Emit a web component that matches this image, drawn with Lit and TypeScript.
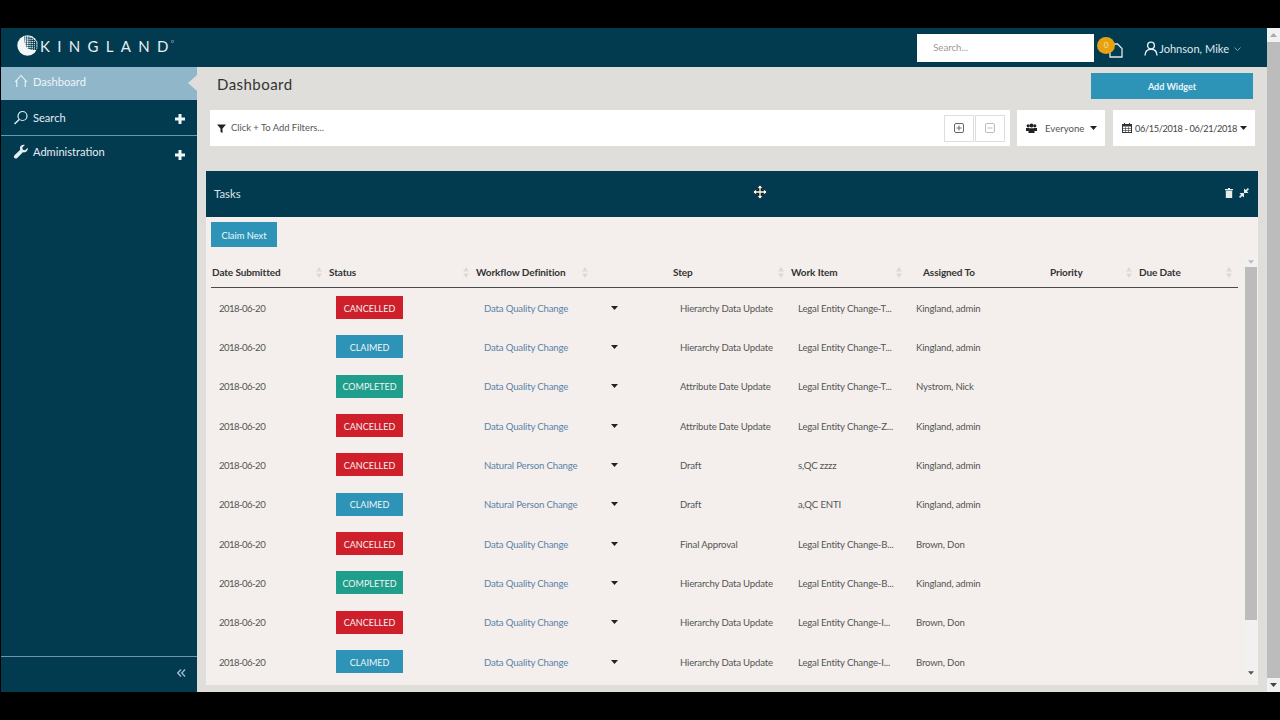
import { LitElement, html, css, svg } from "lit";
import { customElement } from "lit/decorators.js";

const rows = [
  ["CANCELLED", "Data Quality Change", "Hierarchy Data Update", "Legal Entity Change-T...", "Kingland, admin"],
  ["CLAIMED", "Data Quality Change", "Hierarchy Data Update", "Legal Entity Change-T...", "Kingland, admin"],
  ["COMPLETED", "Data Quality Change", "Attribute Date Update", "Legal Entity Change-T...", "Nystrom, Nick"],
  ["CANCELLED", "Data Quality Change", "Attribute Date Update", "Legal Entity Change-Z...", "Kingland, admin"],
  ["CANCELLED", "Natural Person Change", "Draft", "s,QC zzzz", "Kingland, admin"],
  ["CLAIMED", "Natural Person Change", "Draft", "a,QC ENTI", "Kingland, admin"],
  ["CANCELLED", "Data Quality Change", "Final Approval", "Legal Entity Change-B...", "Brown, Don"],
  ["COMPLETED", "Data Quality Change", "Hierarchy Data Update", "Legal Entity Change-B...", "Kingland, admin"],
  ["CANCELLED", "Data Quality Change", "Hierarchy Data Update", "Legal Entity Change-I...", "Brown, Don"],
  ["CLAIMED", "Data Quality Change", "Hierarchy Data Update", "Legal Entity Change-I...", "Brown, Don"],
];

const heads: [string, boolean, string][] = [
  ["Date Submitted", true, ""], ["Status", true, ""], ["Workflow Definition", true, ""], ["", false, ""],
  ["Step", true, ""], ["Work Item", true, ""], ["Assigned To", false, "ind"], ["Priority", true, "pri"], ["Due Date", true, ""],
];

const globeDots = () => {
  const out = [];
  for (let x = 0; x < 6; x++) for (let y = 0; y < 8; y++) {
    const cx = 8.6 + x * 2.2;
    const cy = 1.8 + y * 2.1 + x * 0.15;
    const d = Math.hypot(cx - 10.5, cy - 10.5);
    if (d < 9.9) {
      out.push(svg`<circle cx=${cx} cy=${cy} r=${0.95 - x * 0.07} fill="#f3f5f6"/>`);
    }
  }
  return out;
};

@customElement("app-root")
export class AppRoot extends LitElement {
  static styles = css`
    :host { display: block; width: 1280px; height: 720px; background: #000; overflow: hidden;
      font-family: "Lato", "Noto Sans", sans-serif; color: #333; }
    * { box-sizing: border-box; }
    svg { display: block; flex: none; }
    .frame { display: flex; height: 664px; margin-top: 28px; padding-left: 1px; }
    .app { flex: 1; display: flex; flex-direction: column; min-width: 0; }
    .pagebar { width: 13px; background: #bcbcbc; display: flex; flex-direction: column; justify-content: space-between; }
    .pagebar .end { height: 14px; background: #f1f1f1; display: flex; align-items: center; justify-content: center; }
    .topbar { height: 39px; background: #023a50; display: flex; align-items: center; flex: none; }
    .logo { display: flex; align-items: center; margin: -4px 0 0 16px; gap: 2px; color: #e8eef1; }
    .logo span { font-size: 15px; letter-spacing: 7.3px; font-weight: 400; }
    .logo .r { margin: -9px 0 0 -7px; }
    .search { margin-left: auto; width: 177px; height: 28px; background: #fff; color: #999; font-size: 9.6px;
      display: flex; align-items: center; padding-left: 16px; }
    .bell { position: relative; width: 30px; height: 30px; margin-left: 3px; }
    .badge { position: absolute; left: 0; top: 4px; width: 18px; height: 17px; border-radius: 50%; background: #e6a211;
      color: #f7e3a8; font-size: 8px; display: flex; align-items: center; justify-content: center; }
    .doc { position: absolute; left: 12px; top: 10px; }
    .user { display: flex; align-items: center; color: #dfe8ec; font-size: 11.1px; margin-left: 17px; margin-right: 26px; margin-top: 1px; }
    .user .nm { margin-left: 1px; }
    .user .ch { margin-left: 5px; margin-top: 2px; }
    .content { flex: 1; display: flex; min-height: 0; }
    .side { width: 196px; background: #023a50; color: #e6edf0; display: flex; flex-direction: column; flex: none; }
    .item { display: flex; align-items: flex-start; position: relative; font-size: 11.1px; padding: 8px 0 0 12px; gap: 4px; }
    .item.active { height: 33px; padding-top: 7px; background: #8fb6c9; color: #f0f5f7; }
    .item.active::after { content: ""; position: absolute; right: 0; top: 8px; border: 8px solid transparent;
      border-right: 9px solid #dfdedb; border-left: 0; }
    .item.s { height: 36px; padding-top: 10px; border-bottom: 1px solid #6d97a8; }
    .item.a { height: 34px; padding-top: 8px; }
    .item .ico { width: 16px; height: 16px; }
    .item span { line-height: 15px; }
    .item .plus { position: absolute; left: 173px; top: 13px; }
    .sidefoot { margin-top: auto; height: 36px; border-top: 1px solid #6d97a8; display: flex; justify-content: flex-end;
      align-items: center; padding: 0 11px 4px 0; color: #9dbccb; }
    .main { flex: 1; background: #dfdedb; display: flex; flex-direction: column; min-width: 0; position: relative; padding-left: 8px; }
    .titlerow { display: flex; justify-content: space-between; align-items: flex-start; height: 43px; padding: 6px 14px 0 12px; flex: none; }
    .titlerow h1 { margin: 2px 0 0 0; font-size: 15px; font-weight: 400; letter-spacing: 0.45px; color: #333; }
    .btn { background: #2d94b8; color: #eef7fa; font-size: 9px; font-weight: 700; display: flex; align-items: center; justify-content: center; }
    .add { width: 162px; height: 26px; }
    .filters { display: flex; height: 36px; padding-left: 5px; flex: none; }
    .fbar { width: 800px; background: #fff; display: flex; align-items: center; padding-left: 7px; font-size: 9.4px; color: #555; }
    .fbar .t { margin: -1px 0 0 5px; }
    .sq { width: 30px; height: 27px; border: 1px solid #dedede; display: flex; align-items: center; justify-content: center; background: #fff; }
    .sq.one { margin-left: auto; margin-right: 1px; }
    .sq.two { margin-right: 5px; }
    .drop { background: #fff; display: flex; align-items: center; font-size: 9.6px; color: #555; white-space: nowrap; }
    .drop.ev { width: 88px; margin-left: 7px; padding-left: 9px; gap: 8px; }
    .drop.ev .cr { margin-left: -2px; }
    .drop.dt { width: 142px; margin-left: 8px; padding-left: 9px; gap: 3px; color: #444; font-size: 9.2px; letter-spacing: -0.35px; }
    .card { margin-top: 25px; width: 1052px; flex: 1; margin-bottom: 7px; background: #f4efec; display: flex; flex-direction: column; min-height: 0; margin-left: 1px; }
    .cardhead { height: 46px; background: #023a50; color: #d9e4e9; font-size: 11.3px; display: flex; align-items: center; padding: 0 9px 2px 8px; flex: none; gap: 6px; }
    .cardhead .lbl { margin-right: auto; }
    .move { position: absolute; left: 556px; top: 118px; }
    .cardbody { flex: 1; padding: 5px 0 0 5px; display: flex; flex-direction: column; min-height: 0; }
    .claim { width: 66px; height: 25px; font-weight: 400; font-size: 9.3px; padding-top: 1px; }
    .tablewrap { display: flex; margin-top: 9px; height: 422px; }
    .table { width: 1027px; overflow: hidden; }
    .grid { display: grid; grid-template-columns: 117px 147px 119px 78px 118px 118px 134px 96px 100px; }
    .hdr { height: 32px; border-bottom: 1px solid #4a4a4a; font-size: 10px; letter-spacing: -0.1px; font-weight: 700; color: #333; align-items: center; }
    .hdr > div { position: relative; padding-left: 1px; padding-top: 1px; height: 100%; display: flex; align-items: center; }
    .hdr > div.ind { padding-left: 15px; }
    .hdr > div.pri { padding-left: 8px; }
    .sort { position: absolute; right: 6px; top: 11px; }
    .row { height: 39.33px; align-items: center; font-size: 9.6px; letter-spacing: -0.17px; color: #555; }
    .row > div { padding-left: 8px; padding-top: 1px; white-space: nowrap; overflow: hidden; }
    .row > .stc { padding-top: 0; }
    .row .date { letter-spacing: -0.55px; }
    .row .wf { color: #5a83a8; padding-left: 9px; overflow: visible; }
    .row .car { padding-left: 17px; padding-top: 0; }
    .st { width: 67px; height: 23px; display: flex; align-items: center; justify-content: center; padding-top: 1px; color: #f3f3f3; font-size: 9px; letter-spacing: 0; }
    .CANCELLED { background: #cf1f2b; }
    .CLAIMED { background: #2d94b8; }
    .COMPLETED { background: #1f9e8b; }
    .vs { margin-left: 7px; width: 12px; background: #f1f1f1; display: flex; flex-direction: column; }
    .vs .e { height: 11px; display: flex; align-items: center; justify-content: center; flex: none; }
    .vs .th { height: 353px; background: #bcbcbc; flex: none; }
    .vs .e.b { margin-top: auto; }
  `;

  caret(color = "#222", w = 7) {
    return html`<svg class="cr" width=${w} height="4" viewBox="0 0 7 4"><path d="M0 0h7L3.5 4z" fill=${color}/></svg>`;
  }

  render() {
    return html`
      <div class="frame">
        <div class="app">
          <div class="topbar">
            <div class="logo">
              <svg width="21" height="21" viewBox="0 0 21 21">
                <circle cx="10.500" cy="10.500" r="10.200" fill="#f3f5f6"/>
                <path d="M7.500 .7C13 .4 19 4 20.600 9.500 20.800 11.500 20.400 13.500 19.600 15 15 15.500 11 14.500 9 11.500 7.500 8.500 7 4 7.500 .7z" fill="#023a50"/>
                ${globeDots()}
              </svg>
              <span>KINGLAND</span>
              <svg class="r" width="3" height="3" viewBox="0 0 3 3"><circle cx="1.500" cy="1.500" r="1.200" fill="none" stroke="#c9d6dc" stroke-width=".5"/></svg>
            </div>
            <div class="search">Search...</div>
            <div class="bell">
              <div class="doc">
                <svg width="14" height="15" viewBox="0 0 14 15"><path d="M1 1H8.500L13 5.500V14H1z" fill="none" stroke="#dfe8ec" stroke-width="1.300"/></svg>
              </div>
              <div class="badge">0</div>
            </div>
            <div class="user">
              <svg width="14" height="15" viewBox="0 0 14 15"><circle cx="7" cy="4.500" r="3.400" fill="none" stroke="#e8eef1" stroke-width="1.400"/><path d="M1 14.500c0-4 2.400-6.300 6-6.300s6 2.300 6 6.300" fill="none" stroke="#e8eef1" stroke-width="1.400"/></svg>
              <span class="nm">Johnson, Mike</span>
              <span class="ch"><svg width="7" height="4" viewBox="0 0 7 4"><path d="M.5.5 3.500 3.500 6.500.5" fill="none" stroke="#7fa3b3"/></svg></span>
            </div>
          </div>
          <div class="content">
            <nav class="side">
              <div class="item active">
                <svg class="ico" viewBox="0 0 16 16"><path d="M2 8 8 1.500 14 8M3.800 6.500V13M12.200 6.500V13" fill="none" stroke="#f0f5f7" stroke-width="1.100"/></svg>
                <span>Dashboard</span>
              </div>
              <div class="item s">
                <svg class="ico" viewBox="0 0 16 16"><circle cx="9.500" cy="6" r="4.500" fill="none" stroke="#e6edf0" stroke-width="1.200"/><path d="M6.200 9.500 1.500 14" stroke="#e6edf0" stroke-width="1.500" fill="none"/></svg>
                <span>Search</span>
                <svg class="plus" width="12" height="12" viewBox="0 0 12 12"><path d="M6 1v10M1 6h10" stroke="#f2f5f6" stroke-width="3"/></svg>
              </div>
              <div class="item a">
                <svg class="ico" viewBox="0 0 16 16"><path d="M14.800 3.800 12 6.300 9.800 5.700 9.300 3.600 11.900 1C9.800.3 7.500 1.300 7 3.300 6.800 4.200 7 5 7.200 5.800L1.500 11.200C.6 12 .7 13.300 1.500 14c.8.800 2 .7 2.800-.1L9.900 8.300c2.600.7 5.300-1.400 4.900-4.500z" fill="#e6edf0"/></svg>
                <span>Administration</span>
                <svg class="plus" width="12" height="12" viewBox="0 0 12 12"><path d="M6 1v10M1 6h10" stroke="#f2f5f6" stroke-width="3"/></svg>
              </div>
              <div class="sidefoot">
                <svg width="9" height="8" viewBox="0 0 9 8"><path d="M4 .5.8 4 4 7.500M8 .5 4.800 4 8 7.500" fill="none" stroke="currentColor" stroke-width="1.400"/></svg>
              </div>
            </nav>
            <main class="main">
              <div class="titlerow">
                <h1>Dashboard</h1>
                <div class="btn add">Add Widget</div>
              </div>
              <div class="filters">
                <div class="fbar">
                  <svg width="9" height="9" viewBox="0 0 9 9"><path d="M0 .5h9L5.500 4.500V9L3.500 8V4.500z" fill="#222"/></svg>
                  <span class="t">Click + To Add Filters...</span>
                  <div class="sq one"><svg width="10" height="10" viewBox="0 0 10 10"><rect x=".5" y=".5" width="9" height="9" rx="1.500" fill="none" stroke="#666"/><path d="M5 2.500v5M2.500 5h5" stroke="#666"/></svg></div>
                  <div class="sq two"><svg width="10" height="10" viewBox="0 0 10 10"><rect x=".5" y=".5" width="9" height="9" rx="1.500" fill="none" stroke="#bbb"/><path d="M2.500 5h5" stroke="#bbb"/></svg></div>
                </div>
                <div class="drop ev">
                  <svg width="11" height="10" viewBox="0 0 11 10"><circle cx="2.200" cy="2.800" r="1.600" fill="#222"/><circle cx="8.800" cy="2.800" r="1.600" fill="#222"/><circle cx="5.500" cy="2.500" r="2" fill="#222"/><path d="M0 5h3v3H0zM8 5h3v3H8zM2.500 5.200h6V10h-6z" fill="#222"/></svg>
                  <span>Everyone</span>
                  ${this.caret()}
                </div>
                <div class="drop dt">
                  <svg width="10" height="10" viewBox="0 0 10 10"><rect x=".5" y="1.500" width="9" height="8" fill="none" stroke="#333"/><path d="M0 1.500h10v2H0zM2 0h1v2H2zM7 0h1v2H7z" fill="#333"/><path d="M1 5.500h8M1 7.500h8M3.500 4v5M6.500 4v5" stroke="#333" stroke-width=".6"/></svg>
                  <span>06/15/2018 - 06/21/2018</span>
                  ${this.caret()}
                </div>
              </div>
              <section class="card">
                <div class="cardhead">
                  <span class="lbl">Tasks</span>
                  <svg width="8" height="10" viewBox="0 0 8 10"><path d="M0 1h8v1.200H0zM3 0h2v1H3zM.8 2.800h6.400V10H.8z" fill="#e7edef"/></svg>
                  <svg width="10" height="10" viewBox="0 0 10 10"><path d="M10 1.200 8.800 0 6.800 2 5 .5v4.500h4.500L8 3.200zM0 8.800 1.200 10l2-2L5 9.500V5H.5L2 6.800z" fill="#e7edef"/></svg>
                </div>
                <div class="cardbody">
                  <div class="btn claim">Claim Next</div>
                  <div class="tablewrap">
                    <div class="table">
                      <div class="grid hdr">
                        ${heads.map(([t, s, c]) => html`<div class=${c}>${t}${s ? html`<svg class="sort" width="6" height="11" viewBox="0 0 6 11"><path d="M3 0l3 4.500H0zM3 11 0 6.500h6z" fill="#dcd9d6"/></svg>` : ""}</div>`)}
                      </div>
                      ${rows.map((r) => html`
                        <div class="grid row">
                          <div class="date">2018-06-20</div>
                          <div class="stc"><span class="st ${r[0]}">${r[0]}</span></div>
                          <div class="wf">${r[1]}</div>
                          <div class="car">${this.caret()}</div>
                          <div>${r[2]}</div>
                          <div>${r[3]}</div>
                          <div>${r[4]}</div>
                          <div></div>
                          <div></div>
                        </div>`)}
                    </div>
                    <div class="vs">
                      <div class="e">${this.caret("#bbb", 6)}</div>
                      <div class="th"></div>
                      <div class="e b">${this.caret("#555", 6)}</div>
                    </div>
                  </div>
                </div>
              </section>
              <svg class="move" width="14" height="14" viewBox="0 0 14 14">
                <path d="M7 2v10M2 7h10" stroke="#0a0a0a" stroke-width="3"/>
                <path d="M7 0 10 3.300H4zM7 14 4 10.700h6zM0 7 3.300 4v6zM14 7 10.700 10V4z" fill="#fff" stroke="#0a0a0a" stroke-width=".6"/>
                <path d="M7 2v10M2 7h10" stroke="#fff" stroke-width="1.300"/>
              </svg>
            </main>
          </div>
        </div>
        <div class="pagebar">
          <div class="end"><svg width="7" height="4" viewBox="0 0 7 4"><path d="M3.500 0 7 4H0z" fill="#aaa"/></svg></div>
          <div class="end">${this.caret("#444")}</div>
        </div>
      </div>
    `;
  }
}
